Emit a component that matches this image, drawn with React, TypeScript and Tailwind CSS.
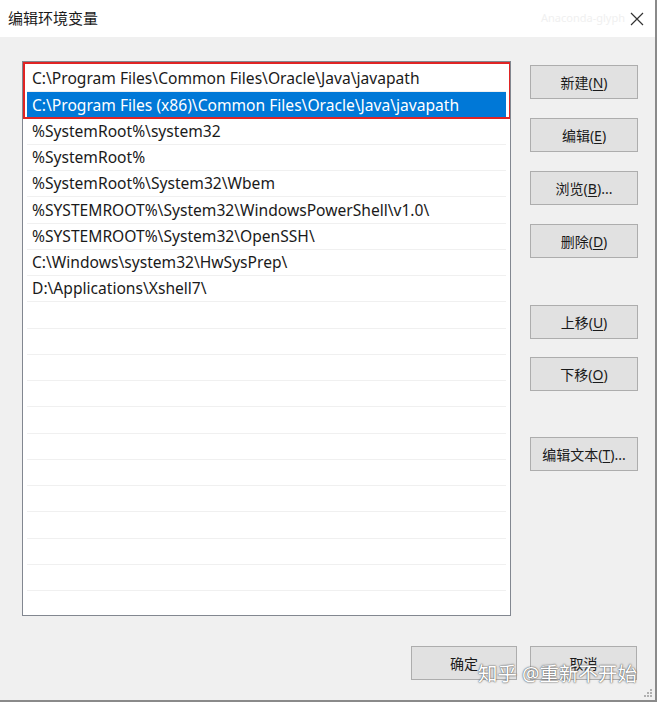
const paths = [
  "C:\\Program Files\\Common Files\\Oracle\\Java\\javapath",
  "C:\\Program Files (x86)\\Common Files\\Oracle\\Java\\javapath",
  "%SystemRoot%\\system32",
  "%SystemRoot%",
  "%SystemRoot%\\System32\\Wbem",
  "%SYSTEMROOT%\\System32\\WindowsPowerShell\\v1.0\\",
  "%SYSTEMROOT%\\System32\\OpenSSH\\",
  "C:\\Windows\\system32\\HwSysPrep\\",
  "D:\\Applications\\Xshell7\\",
];

const font = { fontFamily: '"Noto Sans", "Noto Sans CJK SC", sans-serif' };

function Btn({ label, hot, tail, className = "" }: { label: string; hot: string; tail?: string; className?: string }) {
  return (
    <button
      className={`flex h-[34px] items-center justify-center border border-[#adadad] bg-[#e1e1e1] text-[14px] text-[#1a1a1a] ${className}`}
    >
      {label}(<span className="underline underline-offset-2">{hot}</span>){tail}
    </button>
  );
}

export default function App() {
  const rows = [...paths, ...Array(12).fill("")];
  return (
    <div className="relative h-[702px] w-[657px] overflow-hidden border-r-2 border-b-2 border-[#8a8a8a] bg-[#f0f0f0]" style={font}>
      <div className="flex h-[37px] items-center justify-between bg-white pl-[8px] pr-[10px]">
        <span className="text-[15px] text-[#1a1a1a]">编辑环境变量</span>
        <div className="flex items-center gap-1">
          <span className="text-[11px] text-[#f0f0f0]">Anaconda-glyph</span>
          <svg width="16" height="16" viewBox="0 0 16 16" className="text-[#333]">
            <path d="M2 2 L14 14 M14 2 L2 14" stroke="currentColor" strokeWidth="1.2" />
          </svg>
        </div>
      </div>

      <div className="flex pl-[22px] pt-[24px]">
        <div className="relative h-[555px] w-[489px] overflow-hidden border border-[#828790] bg-white px-[4px] pt-[4px]">
          {rows.map((p, i) => (
            <div
              key={i}
              className={`flex h-[26.25px] items-center border-b border-[#f0f0f0] pl-[5px] pt-[1px] text-[15.6px] ${
                i === 1 ? "bg-[#0078d7] text-white" : "text-[#1a1a1a]"
              }`}
            >
              {p}
            </div>
          ))}
          <div className="absolute left-0 top-0 h-[57px] w-[488px] border-2 border-[#e02424]" />
        </div>

        <div className="ml-[19px] flex w-[108px] flex-col pt-[4px]">
          <Btn label="新建" hot="N" />
          <Btn label="编辑" hot="E" className="mt-[19px]" />
          <Btn label="浏览" hot="B" tail="..." className="mt-[19px]" />
          <Btn label="删除" hot="D" className="mt-[19px]" />
          <Btn label="上移" hot="U" className="mt-[47px]" />
          <Btn label="下移" hot="O" className="mt-[18px]" />
          <Btn label="编辑文本" hot="T" tail="..." className="mt-[46px]" />
        </div>
      </div>

      <div className="mt-[30px] flex justify-end gap-[13px] pr-[18px]">
        <button className="h-[34px] w-[106px] border border-[#adadad] bg-[#e1e1e1] text-[14px] text-[#1a1a1a]">确定</button>
        <button className="h-[34px] w-[107px] border border-[#adadad] bg-[#e1e1e1] text-[14px] text-[#1a1a1a]">取消</button>
      </div>

      <div
        className="absolute left-[478px] top-[659px] text-[19.5px] text-white"
        style={{ textShadow: "0 0 2px #555, 0 0 1px #555" }}
      >
        知乎 @重新不开始
      </div>

      <svg className="absolute bottom-[2px] right-[2px]" width="10" height="10" viewBox="0 0 10 10">
        <g fill="#b0b0b0">
          <rect x="7" y="1" width="2" height="2" />
          <rect x="4" y="4" width="2" height="2" />
          <rect x="7" y="4" width="2" height="2" />
          <rect x="1" y="7" width="2" height="2" />
          <rect x="4" y="7" width="2" height="2" />
          <rect x="7" y="7" width="2" height="2" />
        </g>
      </svg>
    </div>
  );
}
